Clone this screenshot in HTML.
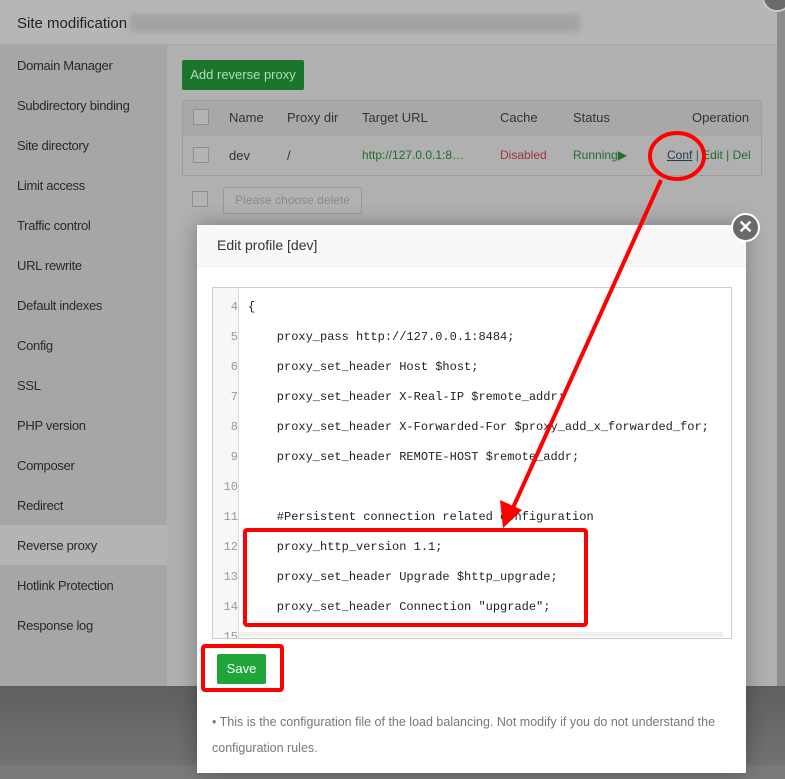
<!DOCTYPE html>
<html><head><style>
*{margin:0;padding:0;box-sizing:border-box}
body{width:785px;height:779px;overflow:hidden;position:relative;background:#686868;font-family:"Liberation Sans",sans-serif;}
.a{position:absolute}
.side div{position:absolute;left:17px;font-size:13px;color:#2a2a2a;letter-spacing:-0.3px}
.ln{position:absolute;left:212px;width:28px;text-align:right;padding-right:0;font-family:"Liberation Mono",monospace;font-size:12px;color:#999}
.cl{position:absolute;left:248px;font-family:"Liberation Mono",monospace;font-size:12px;color:#222;white-space:pre}
</style></head><body>
<div class="a" style="left:0;top:686px;width:785px;height:80px;background:linear-gradient(#606060,#727272)"></div>
<div class="a" style="left:0;top:765px;width:785px;height:14px;background:#7a7a7a"></div>
<div class="a" style="left:777px;top:0;width:8px;height:686px;background:#8c8c8c"></div>
<div class="a" style="left:0;top:0;width:777px;height:686px;background:#b0b0b0"></div>
<div class="a" style="left:0;top:0;width:777px;height:45px;background:#b6b6b6;border-bottom:1px solid #a8a8a8"></div>
<div class="a" style="left:17px;top:15px;font-size:15px;color:#222">Site modification</div>
<div class="a" style="left:130px;top:14px;width:450px;height:18px;background:#a2a2a2;filter:blur(3px)"></div>
<div class="a" style="left:0;top:45px;width:167px;height:641px;background:#a6a6a6"></div>
<div class="a" style="left:0;top:525px;width:167px;height:40px;background:#b4b4b4"></div>
<div class="side">
<div style="top:58px">Domain Manager</div><div style="top:98px">Subdirectory binding</div><div style="top:138px">Site directory</div><div style="top:178px">Limit access</div><div style="top:218px">Traffic control</div><div style="top:258px">URL rewrite</div><div style="top:298px">Default indexes</div><div style="top:338px">Config</div><div style="top:378px">SSL</div><div style="top:418px">PHP version</div><div style="top:458px">Composer</div><div style="top:498px">Redirect</div><div style="top:538px">Reverse proxy</div><div style="top:578px">Hotlink Protection</div><div style="top:618px">Response log</div>
</div>
<div class="a" style="left:182px;top:60px;width:122px;height:30px;background:#1b762c;border-radius:2px;color:#b8d8be;font-size:13px;line-height:30px;text-align:center">Add reverse proxy</div>
<div class="a" style="left:182px;top:100px;width:580px;height:76px;border:1px solid #9e9e9e;background:#b0b0b0"></div>
<div class="a" style="left:183px;top:101px;width:578px;height:35px;background:#a8a8a8"></div>
<div class="a" style="left:193px;top:109px;width:16px;height:16px;border:1px solid #8f8f8f;background:#b4b4b4"></div>
<div class="a" style="left:193px;top:147px;width:16px;height:16px;border:1px solid #8f8f8f;background:#b4b4b4"></div>
<div class="a" style="left:192px;top:191px;width:16px;height:16px;border:1px solid #8f8f8f;background:#b4b4b4"></div>
<div class="a" style="top:110px;left:229px;font-size:13px;color:#333">Name</div>
<div class="a" style="top:110px;left:287px;font-size:13px;color:#333">Proxy dir</div>
<div class="a" style="top:110px;left:362px;font-size:13px;color:#333">Target URL</div>
<div class="a" style="top:110px;left:500px;font-size:13px;color:#333">Cache</div>
<div class="a" style="top:110px;left:573px;font-size:13px;color:#333">Status</div>
<div class="a" style="top:110px;left:692px;font-size:13px;color:#333">Operation</div>
<div class="a" style="top:148px;left:229px;font-size:13px;color:#333">dev</div>
<div class="a" style="top:148px;left:287px;font-size:13px;color:#333">/</div>
<div class="a" style="top:148px;left:362px;font-size:12px;color:#1e6f2a">http://127.0.0.1:8…</div>
<div class="a" style="top:148px;left:500px;font-size:12px;color:#9a3636">Disabled</div>
<div class="a" style="top:148px;left:573px;font-size:12px;color:#1e6f2a">Running▶</div>
<div class="a" style="top:148px;left:667px;font-size:12px;color:#1e6f2a"><span style="color:#223b5a;text-decoration:underline">Conf</span> | Edit | Del</div>
<div class="a" style="left:223px;top:187px;width:139px;height:27px;border:1px solid #9a9a9a;border-radius:2px;background:#b2b2b2;color:#8a8a8a;font-size:12px;line-height:25px;text-align:center">Please choose delete</div>
<div class="a" style="left:762px;top:-18px;width:30px;height:30px;border-radius:50%;background:#6a6a6a;border:2px solid #c8c8c8"></div>
<div class="a" style="left:197px;top:225px;width:549px;height:548px;background:#fff;box-shadow:0 0 20px rgba(0,0,0,.3)"></div>
<div class="a" style="left:197px;top:225px;width:549px;height:42px;background:#f8f8f8;border-bottom:1px solid #eee"></div>
<div class="a" style="left:217px;top:237px;font-size:14px;color:#333">Edit profile [dev]</div>
<div class="a" style="left:731px;top:213px;width:29px;height:29px;border-radius:50%;background:#6a6a6a;border:2px solid #fff;color:#fff;font-size:18px;line-height:24px;text-align:center;font-weight:bold">✕</div>
<div class="a" style="left:212px;top:287px;width:520px;height:352px;border:1px solid #ccc;overflow:hidden;background:#fff">
<div class="a" style="left:0;top:0;width:26px;height:352px;background:#f7f7f7;border-right:1px solid #ddd"></div>
<div class="a" style="left:26px;top:344px;width:484px;height:5px;background:#f0f0f0"></div>
</div>
<div class="ln" style="top:300px;width:26px">4</div><div class="cl" style="top:300px">{</div>
<div class="ln" style="top:330px;width:26px">5</div><div class="cl" style="top:330px">    proxy_pass http://127.0.0.1:8484;</div>
<div class="ln" style="top:360px;width:26px">6</div><div class="cl" style="top:360px">    proxy_set_header Host $host;</div>
<div class="ln" style="top:390px;width:26px">7</div><div class="cl" style="top:390px">    proxy_set_header X-Real-IP $remote_addr;</div>
<div class="ln" style="top:420px;width:26px">8</div><div class="cl" style="top:420px">    proxy_set_header X-Forwarded-For $proxy_add_x_forwarded_for;</div>
<div class="ln" style="top:450px;width:26px">9</div><div class="cl" style="top:450px">    proxy_set_header REMOTE-HOST $remote_addr;</div>
<div class="ln" style="top:480px;width:26px">10</div>
<div class="ln" style="top:510px;width:26px">11</div><div class="cl" style="top:510px">    #Persistent connection related configuration</div>
<div class="ln" style="top:540px;width:26px">12</div><div class="cl" style="top:540px">    proxy_http_version 1.1;</div>
<div class="ln" style="top:570px;width:26px">13</div><div class="cl" style="top:570px">    proxy_set_header Upgrade $http_upgrade;</div>
<div class="ln" style="top:600px;width:26px">14</div><div class="cl" style="top:600px">    proxy_set_header Connection "upgrade";</div>
<div class="ln" style="top:630px;width:26px;height:8px;overflow:hidden">15</div>
<div class="a" style="left:217px;top:654px;width:49px;height:30px;background:#20a53a;border-radius:2px;color:#fff;font-size:13px;line-height:30px;text-align:center">Save</div>
<div class="a" style="left:212px;top:709px;width:525px;font-size:12.5px;line-height:26px;color:#777">• This is the configuration file of the load balancing. Not modify if you do not understand the configuration rules.</div>
<svg class="a" style="left:0;top:0" width="785" height="779">
<rect x="245" y="530" width="341" height="95" rx="2" fill="none" stroke="#f00" stroke-width="4"/>
<rect x="203" y="646" width="79" height="44" rx="2" fill="none" stroke="#f00" stroke-width="4"/>
<ellipse cx="677" cy="156" rx="27" ry="23" fill="none" stroke="#f00" stroke-width="4"/>
<line x1="661" y1="180" x2="512" y2="510" stroke="#f00" stroke-width="4"/>
<polygon points="503,528 500,500 522,510" fill="#f00"/>
</svg>
</body></html>
